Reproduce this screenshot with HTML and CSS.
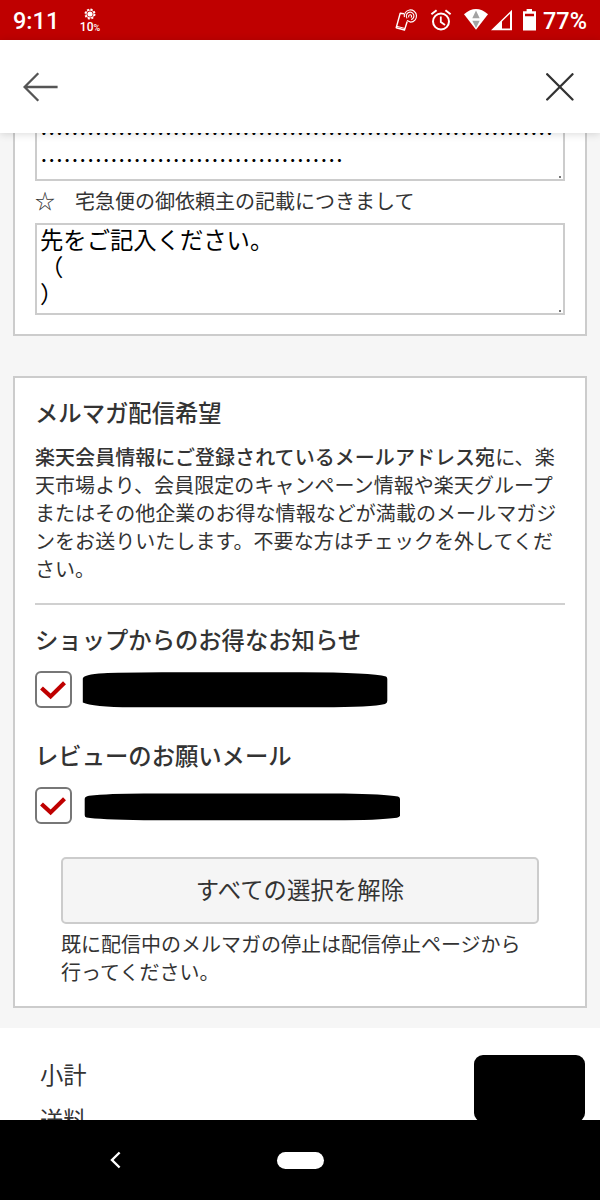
FILE: index.html
```html
<!DOCTYPE html>
<html lang="ja">
<head>
    <meta charset="UTF-8">
    <meta name="viewport" content="width=device-width, initial-scale=1.0">
    <title>注文内容の確認</title>
    <link rel="stylesheet" href="styles.css">
</head>
<body>
    <div class="status-bar">
        <span class="clock">9:11</span>
        <div class="weather">
            <svg width="12" height="12" viewBox="0 0 12 12">
                <circle cx="6" cy="6" r="4.6" fill="none" stroke="#fff" stroke-width="1.8" stroke-dasharray="2 1.61"/>
                <circle cx="6" cy="6" r="4" fill="none" stroke="#fff" stroke-width=".8"/>
                <circle cx="6" cy="6" r="2.6" fill="#fff"/>
            </svg>
            <span>10<small>%</small></span>
        </div>
        <svg class="status-icons" width="144" height="40" viewBox="0 0 144 40">
            <!-- phone with nfc waves -->
            <g fill="none" stroke="#fff">
                <path d="M9 13.8L5.2 13.3L1.2 27.8L9.5 30L12.2 21.5" stroke-width="1.4" stroke-linejoin="round"/>
                <path d="M1.8 26.3L10 28.5" stroke-width="1"/>
                <path d="M14 17.3A1.5 1.5 0 1 1 15.8 17.6" stroke-width="1.1"/>
                <path d="M12.2 18.4A3.8 3.8 0 1 1 16.2 19.6" stroke-width="1.1"/>
                <path d="M9.4 17.2A6.1 6.1 0 1 1 15.6 22.1L12 20.5" stroke-width="1.1"/>
            </g>
            <!-- alarm -->
            <g fill="none" stroke="#fff" stroke-width="2">
                <circle cx="46" cy="21.5" r="8"/>
                <path d="M45.8 16.5V22L50 25" stroke-width="1.8"/>
                <path d="M36.4 14.2L41.6 10.2M55.6 14.2L50.4 10.2"/>
            </g>
            <!-- wifi -->
            <path d="M69 14.2Q81 3.8 93 14.2L81 29.8Z" fill="#fff"/>
            <path d="M77.3 18.2L81 10.5L84.7 18.2ZM77.3 20.8H84.7L81 28Z" fill="#a3a3a3"/>
            <!-- signal -->
            <path fill-rule="evenodd" d="M96 30.2L117 9.8V30.2ZM107 21.5V28.6H115V13.8Z" fill="#fff"/>
            <!-- battery -->
            <path fill-rule="evenodd" d="M128 11.2H131.6V9H137V11.2H141V30.5H128ZM130 13.8V16.3H139V13.8Z" fill="#fff"/>
        </svg>
        <span class="battery-text">77%</span>
    </div>

    <header class="header">
        <svg width="36" height="30" viewBox="0 0 36 30">
            <path d="M15.3 1.2L1.6 15L15.3 28.8M1.6 15H34.6" fill="none" stroke="#555" stroke-width="2.3"/>
        </svg>
        <svg width="28" height="28" viewBox="0 0 28 28">
            <path d="M1.2 1.2L26.5 26.5M26.5 1.2L1.2 26.5" fill="none" stroke="#333" stroke-width="2.3" stroke-linecap="round"/>
        </svg>
    </header>

    <main class="content">
        <section class="card remarks">
            <div class="textbox">…………………………………………………………<br>…………………………………</div>
            <p class="label">☆　宅急便の御依頼主の記載につきまして</p>
            <div class="textbox">先をご記入ください。<br>（<br>）</div>
        </section>

        <section class="card newsletter">
            <h2>メルマガ配信希望</h2>
            <p class="desc"><b>楽天会員情報にご登録されているメールアドレス宛</b>に、楽天市場より、会員限定のキャンペーン情報や楽天グループまたはその他企業のお得な情報などが満載のメールマガジンをお送りいたします。不要な方はチェックを外してください。</p>
            <hr>
            <h3>ショップからのお得なお知らせ</h3>
            <div class="check-row">
                <span class="checkbox">
                    <svg width="26" height="20" viewBox="0 0 26 20"><path d="M1.5 8L10.6 16.4L24.5 2.7" fill="none" stroke="#bf0000" stroke-width="4.2"/></svg>
                </span>
                <svg class="mask" width="306" height="36" viewBox="0 0 306 36">
                    <path d="M.8 7Q0 2.5 22 1.2Q34 .5 80 .3H220Q290 .5 304 4.5Q305.3 5 305.3 7V29Q305.3 31 303 32Q290 35.3 240 35.3H50Q10 35 .8 30.5Z"/>
                </svg>
            </div>
            <h3>レビューのお願いメール</h3>
            <div class="check-row">
                <span class="checkbox">
                    <svg width="26" height="20" viewBox="0 0 26 20"><path d="M1.5 8L10.6 16.4L24.5 2.7" fill="none" stroke="#bf0000" stroke-width="4.2"/></svg>
                </span>
                <svg class="mask second" width="317" height="28" viewBox="0 0 317 28">
                    <path d="M.7 6Q.7 3.5 5 2.8Q25 .5 60 .5H260Q300 1 314 3.5Q316 4 316 6V22.5Q316 24 313 24.7Q295 27.2 250 27.2H60Q15 26.5 2.5 24.5Q.7 24 .7 22Z"/>
                </svg>
            </div>
            <div class="release">
                <button class="release-btn">すべての選択を解除</button>
                <p>既に配信中のメルマガの停止は配信停止ページから行ってください。</p>
            </div>
        </section>

        <section class="summary">
            <div class="labels">
                <div>小計</div>
                <div>送料</div>
            </div>
            <div class="amount"></div>
        </section>
    </main>

    <nav class="nav-bar">
        <svg class="back" width="12" height="18" viewBox="0 0 12 18">
            <path d="M9.6 1.5L2 9L9.6 16.5" fill="none" stroke="#fff" stroke-width="2.4"/>
        </svg>
        <span class="home"></span>
    </nav>
</body>
</html>
```
FILE: styles.css
```css
* {
    box-sizing: border-box;
}
body {
    margin: 0;
    width: 600px;
    height: 1200px;
    overflow: hidden;
    display: flex;
    flex-direction: column;
    background-color: #f6f6f6;
    color: #333;
    font-family: "Noto Sans CJK JP", sans-serif;
}
svg {
    display: block;
    flex: none;
}
h2, h3, p {
    margin: 0;
}

/* top */
.status-bar {
    flex: none;
    height: 40px;
    padding-left: 13px;
    display: flex;
    align-items: center;
    background-color: #bf0000;
    color: #fff;
    font-family: Roboto, sans-serif;
    font-size: 23.5px;
    font-weight: 500;
}
.clock {
    width: 66px;
    padding-top: 1px;
}
.weather {
    width: 22px;
    padding-top: 3px;
    display: flex;
    flex-direction: column;
    align-items: center;
    font-size: 12px;
    line-height: 14px;
}
.weather small {
    font-size: 9px;
}
.status-icons {
    margin-left: 294px;
}
.battery-text {
    padding-top: 1px;
    margin-left: 4px;
}
.header {
    flex: none;
    height: 93px;
    padding: 0 26px 0 22.5px;
    display: flex;
    align-items: center;
    justify-content: space-between;
    background-color: #fff;
    box-shadow: 0 1px 8px rgba(0, 0, 0, 0.15);
    z-index: 1;
}

/* form */
.content {
    flex: 1;
    min-height: 0;
    overflow: hidden;
}
.card {
    margin: 0 13px;
    padding: 20px;
    background-color: #fff;
    border: 2px solid #ccc;
}
.remarks {
    height: 243px;
    margin-top: -40px;
}
.textbox {
    position: relative;
    height: 92px;
    padding: 1px 3px;
    border: 2px solid #ccc;
    color: #000;
    font-size: 23.33px;
    line-height: 27px;
    white-space: nowrap;
}
.remarks .textbox:first-child {
    height: 66px;
    padding-top: 2px;
}
.textbox::after {
    content: '';
    position: absolute;
    right: 2px;
    bottom: 1px;
    width: 2px;
    height: 2px;
    background-color: #777;
}
.label {
    height: 42px;
    font-size: 20px;
    line-height: 39px;
}
.newsletter {
    height: 632px;
    margin-top: 40px;
}
.newsletter h2, .newsletter h3 {
    font-size: 23.33px;
    font-weight: 500;
    line-height: 28px;
}
.desc {
    margin-top: 17px;
    font-size: 20px;
    line-height: 28px;
    letter-spacing: 0.05px;
}
.desc b {
    font-weight: 500;
}
hr {
    height: 2px;
    margin: 20px 0;
    border: none;
    background-color: #d0d0d0;
}
.check-row {
    height: 37px;
    margin: 18px 0 33px;
    display: flex;
    align-items: center;
    gap: 10px;
}
.checkbox {
    width: 37px;
    height: 37px;
    padding-right: 2px;
    display: flex;
    align-items: center;
    justify-content: center;
    border: 2px solid #777;
    border-radius: 6px;
}
.mask.second {
    margin: 3px 0 0 2px;
}
.release {
    margin: 0 26px;
}
.release-btn {
    display: block;
    width: 100%;
    height: 67px;
    padding: 0 0 4px;
    border: 2px solid #ccc;
    border-radius: 5px;
    background-color: #f5f5f5;
    color: #333;
    font-family: inherit;
    font-size: 23.33px;
    letter-spacing: 0.1px;
}
.release p {
    margin-top: 6px;
    font-size: 20px;
    line-height: 28px;
}
.summary {
    height: 120px;
    margin-top: 20px;
    padding: 27px 15px 0 40px;
    display: flex;
    justify-content: space-between;
    background-color: #fff;
}
.labels {
    margin-top: -3px;
    font-size: 23.33px;
    line-height: 45px;
}
.amount {
    width: 111px;
    height: 67px;
    border-radius: 9px;
    background-color: #000;
}

/* bottom */
.nav-bar {
    flex: none;
    height: 80px;
    display: flex;
    align-items: center;
    background-color: #000;
}
.back {
    margin-left: 110px;
}
.home {
    width: 47px;
    height: 17px;
    margin-left: 154.5px;
    border-radius: 9px;
    background-color: #fff;
}
```
